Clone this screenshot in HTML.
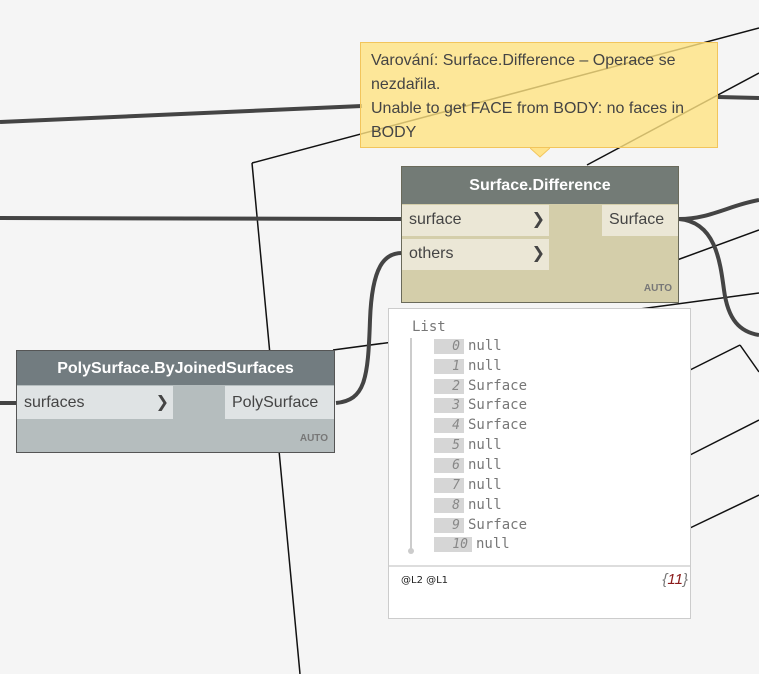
<!DOCTYPE html>
<html><head><meta charset="utf-8"><style>
body{margin:0;width:759px;height:674px;overflow:hidden;background:#f5f5f5;font-family:"Liberation Sans","DejaVu Sans",sans-serif;position:relative}
.abs{position:absolute}
.node{position:absolute;box-sizing:border-box;border:1px solid #6a6a5a}
.hdr{position:absolute;left:0;right:0;top:0;color:#fff;font-weight:bold;font-size:16px;text-align:center}
.port{position:absolute;font-size:16px;color:#444;box-sizing:border-box;padding-left:7px;line-height:30px}
.chev{position:absolute;right:4px;top:0;font-weight:bold;color:#444}
.auto{position:absolute;right:6px;bottom:8px;font-size:10px;font-weight:bold;color:#777}
.li{position:absolute;font-family:"DejaVu Sans Mono","Liberation Mono",monospace;font-size:14px;color:#777}
.ix{display:inline-block;background:#d6d6d6;width:26px;text-align:right;padding-right:4px;font-style:italic;color:#888;margin-right:4px;line-height:15px;font-size:13px}
</style></head><body>
<svg class="abs" style="left:0;top:0" width="759" height="674">
<g stroke="#111" stroke-width="1.5" fill="none">
<line x1="252" y1="163" x2="759" y2="28"/>
<line x1="252" y1="163" x2="300" y2="674"/>
<line x1="587" y1="165" x2="759" y2="73"/>
<line x1="677" y1="260" x2="759" y2="230"/>
<line x1="333" y1="350" x2="759" y2="293"/>
<line x1="690" y1="370" x2="740" y2="345"/>
<line x1="740" y1="345" x2="759" y2="372"/>
<line x1="690" y1="455" x2="759" y2="420"/>
<line x1="690" y1="528" x2="759" y2="495"/>
</g>
<g stroke="#444" stroke-width="4" fill="none">
<path d="M0 122 L362 106"/>
<path d="M718 97 L759 98"/>
<path d="M0 218 L402 219"/>
<path d="M0 403 L16 403"/>
<path d="M336 403 C365 400 368 380 370 320 C372 265 385 253 402 253"/>
<path d="M679 219 C710 219 730 205 759 200"/>
<path d="M679 219 C715 222 720 260 724 290 C728 320 740 332 759 335"/>
</g>
</svg>
<div class="abs" style="left:360px;top:42px;width:358px;height:106px;background:rgba(255,228,130,0.8);border:1px solid #f2c55c;font-size:16px;color:#444;line-height:24px;padding:6px 0 0 10px;box-sizing:border-box">Varování: Surface.Difference – Operace se nezdařila.<br>Unable to get FACE from BODY: no faces in BODY</div>
<svg class="abs" style="left:530px;top:148px" width="20" height="10"><path d="M0 0 L10 9 L20 0" fill="#ffe38a" stroke="#f2c55c"/></svg>

<div class="node" style="left:401px;top:166px;width:278px;height:137px;background:#d4ceaa">
<div class="hdr" style="height:37px;line-height:37px;background:#737b76">Surface.Difference</div>
<div class="port" style="left:0;top:38px;width:147px;height:31px;background:#ebe7d6">surface<span class="chev">❯</span></div>
<div class="port" style="left:0;top:72px;width:147px;height:31px;background:#ebe7d6">others<span class="chev">❯</span></div>
<div class="port" style="left:200px;top:38px;width:76px;height:31px;background:#ebe7d6;padding-left:7px">Surface</div>
<div class="auto">AUTO</div>
</div>

<div class="node" style="left:16px;top:350px;width:319px;height:103px;background:#b5bdbe;border-color:#555">
<div class="hdr" style="height:34px;line-height:35px;background:#727c80">PolySurface.ByJoinedSurfaces</div>
<div class="port" style="left:0;top:35px;width:156px;height:33px;background:#dfe3e4;line-height:33px">surfaces<span class="chev">❯</span></div>
<div class="port" style="left:208px;top:35px;width:109px;height:33px;background:#dfe3e4;line-height:33px">PolySurface</div>
<div class="auto">AUTO</div>
</div>

<div class="abs" style="left:388px;top:308px;width:303px;height:311px;background:#fff;border:1px solid #ccc;box-sizing:border-box">
<div class="li" style="left:23px;top:10px">List</div>
<div class="abs" style="left:21px;top:29px;width:2px;height:213px;background:#ccc"></div>
<div class="abs" style="left:19px;top:239px;width:6px;height:6px;border-radius:3px;background:#ccc"></div>
<div class="li" style="left:45px;top:29px"><span class="ix">0</span>null</div>
<div class="li" style="left:45px;top:49px"><span class="ix">1</span>null</div>
<div class="li" style="left:45px;top:69px"><span class="ix">2</span>Surface</div>
<div class="li" style="left:45px;top:88px"><span class="ix">3</span>Surface</div>
<div class="li" style="left:45px;top:108px"><span class="ix">4</span>Surface</div>
<div class="li" style="left:45px;top:128px"><span class="ix">5</span>null</div>
<div class="li" style="left:45px;top:148px"><span class="ix">6</span>null</div>
<div class="li" style="left:45px;top:168px"><span class="ix">7</span>null</div>
<div class="li" style="left:45px;top:188px"><span class="ix">8</span>null</div>
<div class="li" style="left:45px;top:208px"><span class="ix">9</span>Surface</div>
<div class="li" style="left:45px;top:227px"><span class="ix" style="width:34px">10</span>null</div>
<div class="abs" style="left:0;top:256px;width:301px;height:2px;background:#ddd"></div>
<div class="abs" style="left:12px;top:266px;font-size:10px;color:#222;font-family:'DejaVu Sans',sans-serif">@L2 @L1</div>
<div class="abs" style="right:2px;top:262px;font-size:15px;font-style:italic;color:#777">{<span style="color:#8a1a1a">11</span>}</div>
</div>
</body></html>
